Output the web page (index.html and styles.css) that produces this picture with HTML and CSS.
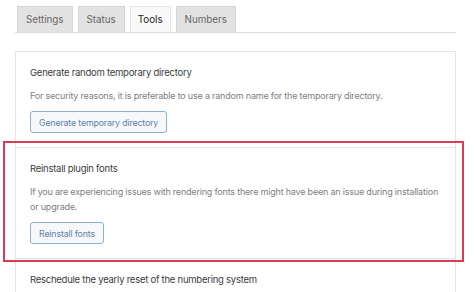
FILE: index.html
```html
<!DOCTYPE html>
<html lang="en">

<head>
    <meta charset="UTF-8">
    <meta name="viewport" content="width=device-width, initial-scale=1.0">
    <title>Tools</title>
    <link rel="stylesheet" href="styles.css">
</head>

<body>

    <div class="page">
        <!-- Tab bar -->
        <div class="tabs">
            <div class="tab">Settings</div>
            <div class="tab">Status</div>
            <div class="tab active">Tools</div>
            <div class="tab">Numbers</div>
        </div>

        <div class="card">
            <div class="section">
                <div class="section-title">Generate random temporary directory</div>
                <p class="section-text">For security reasons, it is preferable to use a random name for the temporary directory.</p>
                <button type="button" class="btn">Generate temporary directory</button>
            </div>

            <div class="section">
                <div class="section-title">Reinstall plugin fonts</div>
                <p class="section-text">If you are experiencing issues with rendering fonts there might have been an issue during installation or upgrade.</p>
                <button type="button" class="btn">Reinstall fonts</button>
            </div>

            <div class="section">
                <div class="section-title">Reschedule the yearly reset of the numbering system</div>
            </div>
        </div>

        <!-- Highlight around the second section -->
        <div class="highlight"></div>
    </div>

</body>

</html>
```

FILE: styles.css
```css
/* Basic styling */
body {
    font-family: Inter, "Noto Sans", sans-serif;
    background: #ffffff;
    margin: 0;
}

.page {
    position: relative;
    width: 474px;
    height: 292px;
    overflow: hidden;
}

.tabs {
    display: flex;
    gap: 5px;
    margin: 6px 18px 0 15px;
    padding-left: 2px;
    border-bottom: 1px solid #dcdcdc;
}

.tab {
    height: 25px;
    line-height: 25px;
    padding: 0 8px;
    font-size: 9.8px;
    color: #666;
    background: #e2e2e2;
    border: 1px solid #d6d6d6;
    border-bottom: none;
}

.tab.active {
    padding: 0 7px;
    color: #222;
    background: #f9f9f9;
    border-color: #e4e4e4;
}

.card {
    margin: 18px 18px 0 15px;
    border: 1px solid #e4e4e4;
}

.section {
    padding: 13px 14px 14px;
    border-bottom: 1px solid #e6e6ea;
}

.section-title {
    font-size: 9.5px;
    letter-spacing: -0.25px;
    line-height: 16px;
    color: #3c3c3c;
}

.section-text {
    margin: 7px 0 8px;
    font-size: 9px;
    letter-spacing: -0.2px;
    line-height: 15px;
    color: #808080;
}

.btn {
    display: block;
    height: 22px;
    padding: 0 8px;
    font-family: inherit;
    font-size: 8.8px;
    letter-spacing: -0.15px;
    color: #5b82ab;
    background: #f7f8fa;
    border: 1px solid #8fb0cf;
    border-radius: 3px;
}

.highlight {
    position: absolute;
    left: 3px;
    top: 141px;
    width: 457px;
    height: 117px;
    border: 2px solid #dc3a55;
}
```
